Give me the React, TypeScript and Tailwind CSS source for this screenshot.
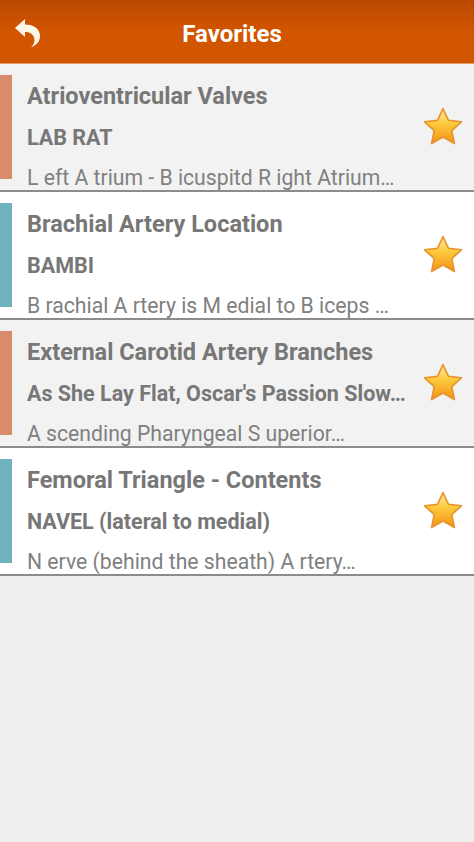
import React from "react";

type Item = { title: string; sub: string; desc: string; color: string; bg: string };

const items: Item[] = [
  { title: "Atrioventricular Valves", sub: "LAB RAT", desc: "L eft A trium - B icuspitd R ight Atrium…", color: "bg-[#d98c6c]", bg: "bg-[#f2f2f2]" },
  { title: "Brachial Artery Location", sub: "BAMBI", desc: "B rachial A rtery is M edial to B iceps …", color: "bg-[#6fb2bd]", bg: "bg-white" },
  { title: "External Carotid Artery Branches", sub: "As She Lay Flat, Oscar's Passion Slow…", desc: "A scending Pharyngeal S uperior…", color: "bg-[#d98c6c]", bg: "bg-[#f2f2f2]" },
  { title: "Femoral Triangle - Contents", sub: "NAVEL (lateral to medial)", desc: "N erve (behind the sheath) A rtery…", color: "bg-[#6fb2bd]", bg: "bg-white" },
];

function Star() {
  return (
    <svg width="44" height="42" viewBox="0 0 42 40">
      <defs>
        <linearGradient id="sg" x1="0" y1="0" x2="0" y2="1">
          <stop offset="0" stopColor="#fff0a0" />
          <stop offset="0.45" stopColor="#fcc83a" />
          <stop offset="1" stopColor="#f5901a" />
        </linearGradient>
      </defs>
      <path
        d="M21 2.5 L26.2 13.6 L38.6 15 L29.4 23.4 L31.9 35.8 L21 29.6 L10.1 35.8 L12.6 23.4 L3.4 15 L15.8 13.6 Z"
        fill="url(#sg)"
        stroke="#e8962a"
        strokeWidth="1.6"
        strokeLinejoin="round"
      />
    </svg>
  );
}

function BackIcon() {
  return (
    <svg width="30" height="32" viewBox="0 0 30 32">
      <path
        d="M2 11 L12 2 L12 7.5 C21 7.5 27 12 27 19 C27 24 24 28 18 30.5 C21.5 27 22 23.5 21 20.5 C19.8 16.8 16.5 15 12 15 L12 20 Z"
        fill="#fff6ea"
      />
    </svg>
  );
}

export default function App() {
  return (
    <div className="w-[474px] h-[842px] bg-[#eeeeee] flex flex-col overflow-hidden" style={{ fontFamily: "Roboto, 'Liberation Sans', sans-serif" }}>
      <div className="h-[64px] shrink-0 bg-gradient-to-b from-[#b94a00] via-[#d25500] to-[#d25500] flex items-center relative border-b border-[#e79a66]">
        <div className="absolute left-[13px] top-[17px]">
          <BackIcon />
        </div>
        <div className="flex-1 text-center text-white font-bold text-[24px] pr-[10px] pt-[4px]">Favorites</div>
      </div>
      {items.map((it, i) => (
        <div key={i} className={`h-[128px] shrink-0 ${it.bg} border-b-2 border-[#8c8c8c] flex items-center relative`}>
          <div className={`w-[12px] h-[104px] ${it.color} shrink-0`} />
          <div className="flex-1 min-w-0 pl-[15px] pr-[4px] text-[#777777] flex flex-col self-stretch pt-[17px]">
            <div className="font-bold text-[23.5px] leading-[30px] whitespace-nowrap overflow-hidden">{it.title}</div>
            <div className="font-bold text-[21.5px] leading-[28px] mt-[15px] whitespace-nowrap overflow-hidden">{it.sub}</div>
            <div className="text-[21.2px] leading-[28px] mt-[13px] whitespace-nowrap overflow-hidden text-[#808080]">{it.desc}</div>
          </div>
          <div className="w-[62px] shrink-0 flex justify-center">
            <Star />
          </div>
        </div>
      ))}
      <div className="flex-1" />
    </div>
  );
}
